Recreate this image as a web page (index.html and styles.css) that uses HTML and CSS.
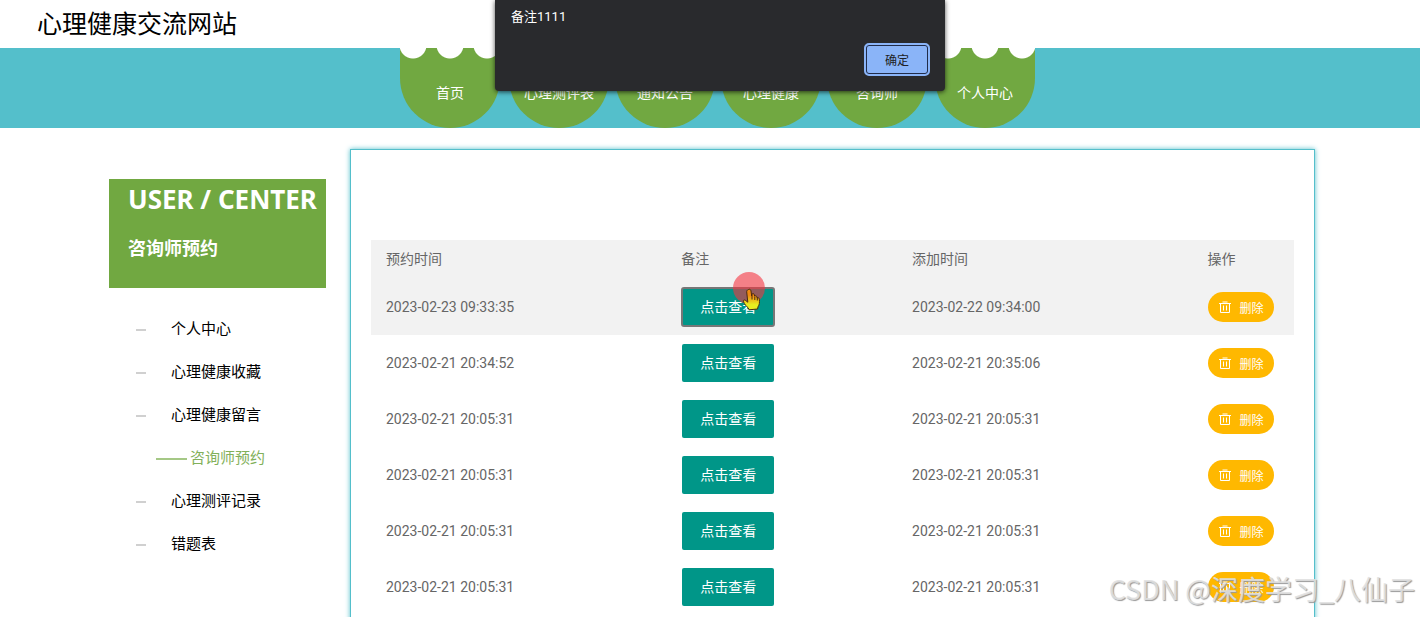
FILE: index.html
```html
<!DOCTYPE html>
<html lang="zh-CN">
<head>
    <meta charset="UTF-8">
    <meta name="viewport" content="width=device-width, initial-scale=1.0">
    <title>心理健康交流网站</title>
    <link rel="stylesheet" href="styles.css">
</head>
<body>
    <header class="site-header">心理健康交流网站</header>

    <!-- Main navigation -->
    <nav class="site-nav">
        <a class="nav-item nav-first" href="#">首页</a>
        <a class="nav-item" href="#">心理测评表</a>
        <a class="nav-item" href="#">通知公告</a>
        <a class="nav-item" href="#">心理健康</a>
        <a class="nav-item" href="#">咨询师</a>
        <a class="nav-item nav-last" href="#">个人中心</a>
    </nav>

    <div class="container">
        <!-- User center menu -->
        <aside class="sidebar">
            <div class="sidebar-title">
                <h2>USER / CENTER</h2>
                <h3>咨询师预约</h3>
            </div>
            <ul class="menu">
                <li><a href="#">个人中心</a></li>
                <li><a href="#">心理健康收藏</a></li>
                <li><a href="#">心理健康留言</a></li>
                <li class="active"><a href="#">咨询师预约</a></li>
                <li><a href="#">心理测评记录</a></li>
                <li><a href="#">错题表</a></li>
            </ul>
        </aside>

        <main class="panel">
            <table class="data-table">
                <thead>
                    <tr>
                        <th class="col-time">预约时间</th>
                        <th class="col-note">备注</th>
                        <th class="col-time">添加时间</th>
                        <th class="col-action">操作</th>
                    </tr>
                </thead>
                <tbody id="rows"></tbody>
            </table>
        </main>
    </div>

    <!-- Message box -->
    <div class="dialog" role="alertdialog" aria-labelledby="dialogText">
        <p class="dialog-text" id="dialogText">备注1111</p>
        <button class="dialog-button" type="button">确定</button>
    </div>

    <!-- Pointer with click highlight -->
    <div class="pointer">
        <svg width="34" height="40" viewBox="0 0 34 40">
            <defs>
                <linearGradient id="hand" x1="0" y1="0" x2="0" y2="1">
                    <stop offset="0.3" stop-color="#f08a10"/>
                    <stop offset="0.75" stop-color="#e8ee20"/>
                </linearGradient>
            </defs>
            <circle cx="17" cy="16" r="16" fill="#f5333f" fill-opacity="0.6"/>
            <path d="M16.500 17.500c1.400-.8 2.300.3 2.500 1.500l.7 5 .3-2c1.300-.8 2.200-.2 2.400 1l.2 1c1.200-.7 2-.1 2.300 1l.1.800c1.400-.6 2.100.2 2.300 1.500.4 3 .2 5.500-1.300 7.500l-.4 2.200-8.600.8-.8-2c-2-1.300-3.500-3.600-4.700-6-.7-1.500.7-2.400 2-1.400l2.300 1.800-1.100-10.300c0-1 .4-1.900 1.800-2.400z" fill="url(#hand)" stroke="#4a2a10" stroke-width="1"/>
            <path d="M20 23.500v4M22.800 24.500v3.500M25.300 25.800v2.700" fill="none" stroke="#4a2a10" stroke-width="1"/>
        </svg>
    </div>

    <div class="watermark">CSDN @深度学习_八仙子</div>

    <script src="script.js"></script>
</body>
</html>
```

FILE: styles.css
```css
* {
    box-sizing: border-box;
}

body {
    margin: 0;
    position: relative;
    height: 100vh;
    overflow: hidden;
    background-color: #fff;
    color: #000;
    font-family: Roboto, "Noto Sans CJK SC", sans-serif;
    font-size: 14px;
}

a {
    color: inherit;
    text-decoration: none;
}

button {
    font-family: inherit;
    cursor: pointer;
}

.site-header {
    height: 48px;
    padding-left: 37px;
    font-size: 25px;
    line-height: 49px;
}

.site-nav {
    display: flex;
    justify-content: center;
    gap: 6px;
    height: 80px;
    padding-left: 15px;
    background-color: #54bfcb;
}

.nav-item {
    width: 100px;
    border-radius: 0 0 50px 50px;
    background-color: #71a841;
    background-image:
        radial-gradient(circle at 13px -3px, #fff 13px, transparent 14px),
        radial-gradient(circle at 50px -3px, #fff 13px, transparent 14px),
        radial-gradient(circle at 87px -3px, #fff 13px, transparent 14px);
    color: #fff;
    line-height: 91px;
    text-align: center;
}

.nav-first {
    margin-right: 3px;
}

.nav-last {
    margin-left: 2px;
}

.container {
    display: flex;
    align-items: flex-start;
    gap: 24px;
    margin: 21px 105px 0 109px;
}

.sidebar {
    flex: 0 0 217px;
    margin-top: 30px;
}

.sidebar-title {
    height: 109px;
    padding-left: 19px;
    background-color: #71a841;
    color: #fff;
}

.sidebar-title h2 {
    margin: 0;
    font-family: "Noto Sans", sans-serif;
    font-size: 26px;
    line-height: 41px;
    white-space: nowrap;
}

.sidebar-title h3 {
    margin: 14px 0 0;
    font-size: 18px;
    line-height: 30px;
}

.menu {
    margin: 20px 0 0;
    padding: 0 0 0 27px;
    list-style: none;
    font-size: 15px;
    line-height: 43px;
}

.menu li {
    display: flex;
    align-items: center;
    gap: 25px;
}

.menu li::before {
    content: "";
    width: 10px;
    height: 2px;
    background-color: #d0d0d0;
}

.menu .active {
    gap: 3px;
    padding-left: 20px;
    color: #82b05a;
}

.menu .active::before {
    width: 31px;
    background-color: #a5c886;
}

.panel {
    flex: 1;
    padding: 90px 20px 20px;
    border: 1px solid #54bfcb;
    box-shadow: 0 0 5px #54bfcb;
}

.data-table {
    width: 100%;
    table-layout: fixed;
    border-collapse: collapse;
    color: #666;
}

.data-table th {
    height: 39px;
    padding: 0 15px 4px;
    background-color: #f2f2f2;
    font-weight: normal;
    text-align: left;
}

.data-table td {
    height: 56px;
    padding: 0 0 0 15px;
}

.data-table .button-cell {
    padding-left: 16px;
}

.data-table .selected {
    background-color: #f2f2f2;
}

.col-time {
    width: 32%;
}

.col-note {
    width: 25%;
}

.col-action {
    width: 11%;
}

.view-button {
    display: block;
    height: 38px;
    padding: 0 18px 2px;
    border: none;
    border-radius: 2px;
    background-color: #009688;
    color: #fff;
    font-size: 14px;
}

.selected .view-button {
    outline: 2px solid #777;
    outline-offset: -1px;
}

.delete-button {
    display: flex;
    align-items: center;
    justify-content: center;
    gap: 8px;
    width: 66px;
    height: 30px;
    padding: 0;
    border: none;
    border-radius: 15px;
    background-color: #ffb800;
    color: #fff;
    font-size: 12px;
}

.dialog {
    position: absolute;
    top: 0;
    left: 495px;
    display: flex;
    flex-direction: column;
    width: 450px;
    height: 91px;
    padding: 7px 15px 15px 16px;
    border-radius: 0 0 4px 4px;
    background-color: #292a2d;
    box-shadow: 0 1px 5px rgba(0, 0, 0, 0.7);
    color: #fff;
}

.dialog-text {
    margin: 0;
    font-size: 13px;
    line-height: 20px;
}

.dialog-button {
    align-self: flex-end;
    width: 66px;
    height: 33px;
    margin-top: auto;
    border: 2px solid #8ab4f8;
    border-radius: 5px;
    background-color: #8ab4f8;
    box-shadow: inset 0 0 0 1px #202c4a;
    color: #202124;
    font-size: 12px;
}

.pointer {
    position: absolute;
    top: 272px;
    left: 732px;
}

.watermark {
    position: absolute;
    right: 5px;
    bottom: 8px;
    color: rgba(225, 225, 225, 0.9);
    font-family: "Noto Sans CJK SC", sans-serif;
    font-size: 27px;
    line-height: 40px;
    text-shadow: 1px 1px 1px #999;
}
```

FILE: script.js
```js
const rows = [
    ['2023-02-23 09:33:35', '2023-02-22 09:34:00'],
    ['2023-02-21 20:34:52', '2023-02-21 20:35:06'],
    ['2023-02-21 20:05:31', '2023-02-21 20:05:31'],
    ['2023-02-21 20:05:31', '2023-02-21 20:05:31'],
    ['2023-02-21 20:05:31', '2023-02-21 20:05:31'],
    ['2023-02-21 20:05:31', '2023-02-21 20:05:31']
];

const trashIcon = `<svg width="12" height="12" viewBox="0 0 12 12" fill="none" stroke="#fff">
    <path d="M0 2.500h12M3.500 1h5M1.500 2.500v9h9v-9M4.500 4.500v5M7.500 4.500v5"/>
</svg>`;

const tbody = document.getElementById('rows');
rows.forEach((row, index) => {
    const tr = document.createElement('tr');
    if (index === 0) {
        tr.className = 'selected';
    }
    tr.innerHTML = `
        <td>${row[0]}</td>
        <td class="button-cell"><button class="view-button" type="button">点击查看</button></td>
        <td>${row[1]}</td>
        <td class="button-cell"><button class="delete-button" type="button">${trashIcon}<span>删除</span></button></td>`;
    tbody.appendChild(tr);
});
```
